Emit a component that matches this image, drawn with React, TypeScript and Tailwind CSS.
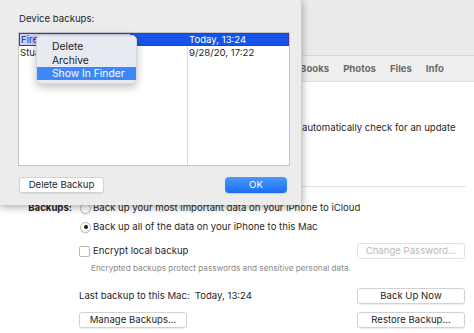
import { ReactNode } from 'react';

const tabs = ['Summary', 'Music', 'Movies', 'TV Shows', 'Podcasts', 'Audiobooks', 'Books', 'Photos', 'Files', 'Info'];

function MacButton({ children, disabled, className = '' }: { children: ReactNode; disabled?: boolean; className?: string }) {
  return <div className={`h-[16px] flex items-center justify-center rounded-[3px] bg-white border ${disabled ? 'border-[#e2e2e2] text-[#b9b9b9]' : 'border-[#d2d2d2] text-[#1f1f1f] shadow-[0_1px_1px_rgba(0,0,0,0.08)]'} ${className}`}>
    {children}
  </div>;
}

function Radio({ checked }: { checked?: boolean }) {
  return <div className="w-[11px] h-[11px] rounded-full bg-white border border-[#b8b8b8] shadow-[0_1px_1px_rgba(0,0,0,0.06)] flex items-center justify-center">
    {checked && <div className="w-[4px] h-[4px] rounded-full bg-[#1a1a1a]" />}
  </div>;
}

export default function App() {
  return <div className="relative w-[474px] h-[333px] overflow-hidden bg-white font-['Inter','Liberation_Sans',sans-serif] text-[9.6px] leading-none text-[#1f1f1f]">
    {/* window toolbar + tabs */}
    <div className="h-[56px] bg-[#ebebeb] border-b border-[#d8d8d8]" />
    <div className="h-[26px] bg-[#efefef] border-b border-[#e0e0e0] flex items-center justify-end gap-[14px] pr-[30px] text-[9.6px] font-bold text-[#6a6a6a]">
      {tabs.map(t => <span key={t}>{t}</span>)}
    </div>

    {/* software section */}
    <div className="h-[104px] pt-[40px]">
      <div className="flex h-[12px] items-center whitespace-nowrap">
        <span className="ml-[79px] w-[223px] overflow-hidden">Your iPhone software is up to date. Your Mac will</span>
        <span>automatically check for an update</span>
      </div>
    </div>
    <div className="ml-[14px] mr-[8px] border-t border-[#e3e3e3]" />

    {/* backups section */}
    <div className="flex pt-[13px]">
      <div className="w-[72px] h-[16px] flex items-center justify-end font-bold">Backups:</div>
      <div className="flex-1 pl-[7px] pr-[9px] flex flex-col">
        <div className="h-[16px] flex items-center gap-[2px] ml-[1px]">
          <Radio />
          <span>Back up your most important data on your iPhone to iCloud</span>
        </div>
        <div className="mt-[3px] h-[16px] flex items-center gap-[2px] ml-[1px]">
          <Radio checked />
          <span>Back up all of the data on your iPhone to this Mac</span>
        </div>
        <div className="mt-[8px] h-[16px] flex items-center justify-between">
          <div className="flex items-center gap-[3px]">
            <div className="w-[11px] h-[11px] rounded-[2px] bg-white border border-[#b8b8b8]" />
            <span>Encrypt local backup</span>
          </div>
          <MacButton disabled className="w-[108px]">Change Password…</MacButton>
        </div>
        <div className="mt-[2px] h-[14px] flex items-center pl-[12px] text-[8.2px] text-[#8a8a8a]">
          Encrypted backups protect passwords and sensitive personal data.
        </div>
        <div className="mt-[13px] h-[16px] flex items-center justify-between">
          <div className="flex gap-[5px]">
            <span>Last backup to this Mac:</span>
            <span>Today, 13:24</span>
          </div>
          <MacButton className="w-[108px]">Back Up Now</MacButton>
        </div>
        <div className="mt-[8px] flex justify-between">
          <MacButton className="w-[108px]">Manage Backups…</MacButton>
          <MacButton className="w-[108px]">Restore Backup…</MacButton>
        </div>
      </div>
    </div>

    {/* sheet */}
    <div className="absolute left-0 top-0 w-[302px] h-[205px] bg-[#ececec] border-r border-[#cdcdcd] shadow-[0_2px_8px_rgba(0,0,0,0.35)] pl-[18px]">
      <div className="pt-[13px] h-[25px] pl-[1px] leading-[12px]">Device backups:</div>
      <div className="mt-[7px] w-[272px] h-[134px] bg-white border border-[#c6c6c6] flex flex-col">
        <div className="h-[13px] flex bg-[#1554e6] border border-[#3b3ca8]">
          <div className="w-[168px] flex items-center">
            <span className="h-full w-[110px] flex items-center bg-[#c8d0f4] text-[#1b2fa0] pl-[1px] whitespace-nowrap overflow-hidden">Fireball’s iPhone</span>
          </div>
          <div className="flex-1 flex items-center pl-[1px] text-white">Today, 13:24</div>
        </div>
        <div className="flex flex-1">
          <div className="w-[169px] border-r border-[#dadada]">
            <div className="h-[14px] flex items-center pl-[1px]">Stuart’s iPhone</div>
          </div>
          <div className="flex-1">
            <div className="h-[14px] flex items-center pl-[1px]">9/28/20, 17:22</div>
          </div>
        </div>
      </div>
      <div className="mt-[11px] w-[272px] flex justify-between">
        <MacButton className="w-[85px] ml-[1px]">Delete Backup</MacButton>
        <div className="w-[62px] h-[16px] mr-[3px] rounded-[4px] bg-gradient-to-b from-[#4b98f9] to-[#186df2] text-white flex items-center justify-center shadow-[0_1px_1px_rgba(0,0,0,0.15)]">OK</div>
      </div>

      {/* context menu */}
      <div className="absolute left-[36px] top-[35px] w-[101px] py-[3px] rounded-[5px] bg-[#e7eaf1] border border-[#d3d6dd] shadow-[0_3px_8px_rgba(0,0,0,0.25)] text-[10.3px]">
        <div className="h-[14px] flex items-center pl-[15px]">Delete</div>
        <div className="h-[14px] flex items-center pl-[15px]">Archive</div>
        <div className="h-[13px] flex items-center pl-[15px] bg-[#3e87f6] text-white">Show In Finder</div>
      </div>
    </div>
  </div>;
}
